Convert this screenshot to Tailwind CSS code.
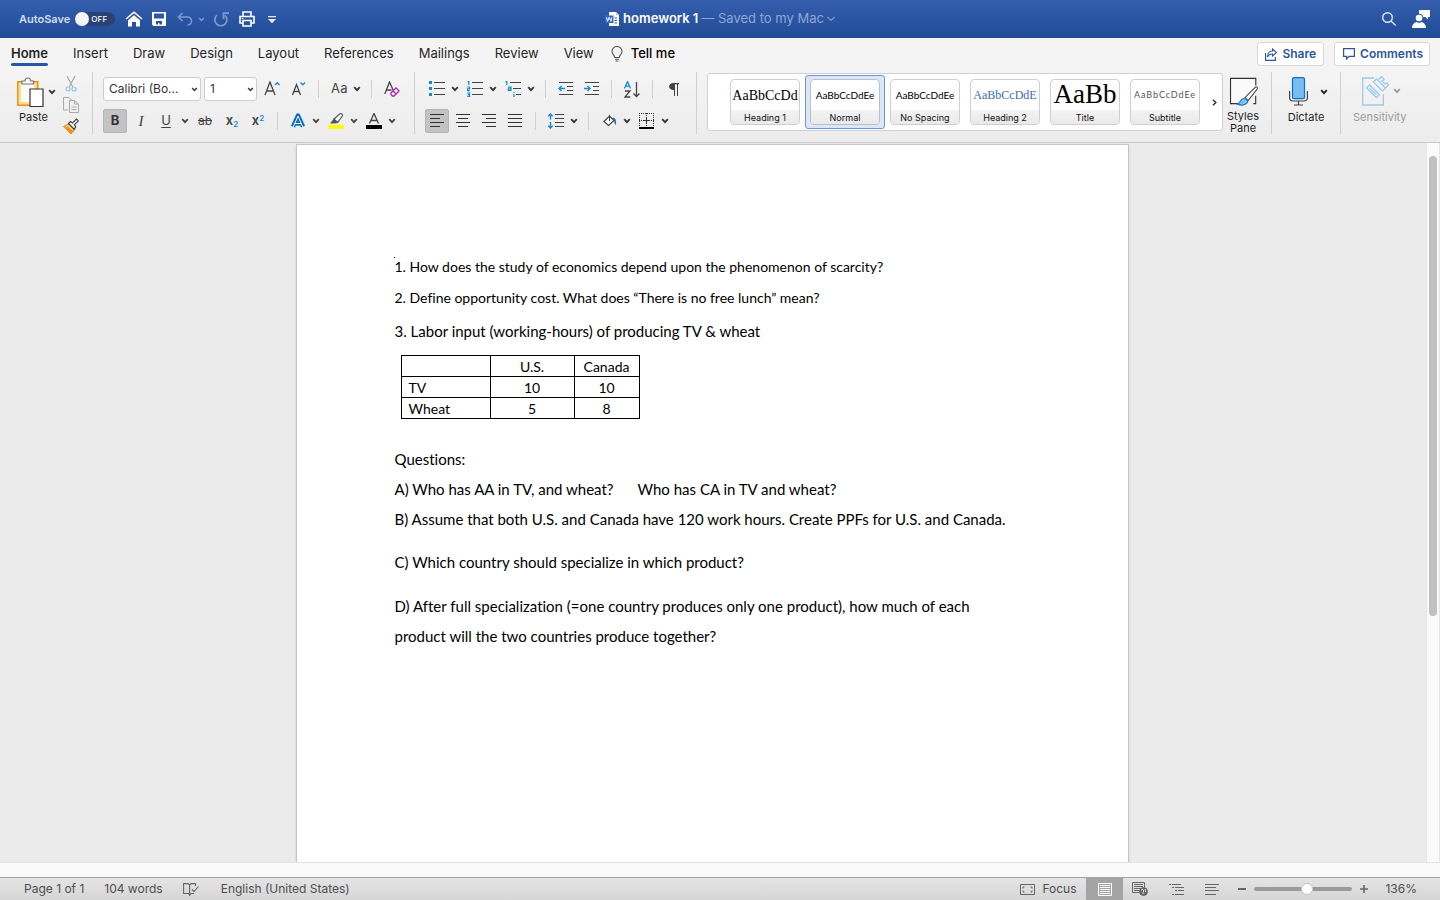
<!DOCTYPE html>
<html lang="en">
<head>
    <meta charset="UTF-8">
    <meta name="viewport" content="width=device-width, initial-scale=1.0">
    <title>homework 1</title>
    <script src="https://cdn.jsdelivr.net/npm/@tailwindcss/browser@4"></script>
</head>
<body class="h-screen flex flex-col overflow-hidden bg-[#ebebeb] text-[#262626] font-['Inter',sans-serif]">

    <!-- shared icons -->
    <svg class="hidden">
        <symbol id="chev" viewBox="0 0 8 6"><path d="M1.2 1.2 4 4.2 6.8 1.2" fill="none" stroke="currentColor" stroke-width="1.8"/></symbol>
    </svg>

    <!-- title bar -->
    <header class="h-[38px] shrink-0 grid grid-cols-[1fr_auto_1fr] items-center bg-linear-to-b from-[#355fae] to-[#204b96] text-white">
        <div class="flex items-center pl-[19px]">
            <label for="autosave" class="text-[11px] font-semibold text-[#d3dcee]">AutoSave</label>
            <div class="relative ml-[5px] w-10 h-[14px]">
                <input id="autosave" type="checkbox" class="appearance-none block w-10 h-[14px] rounded-full bg-[#2a4272]">
                <span class="absolute left-0 top-0 size-[14px] rounded-full bg-[#f4f4f4] pointer-events-none"></span>
                <span class="absolute left-4 top-0 text-[8px] leading-[14px] font-medium tracking-wide pointer-events-none">OFF</span>
            </div>
            <button class="ml-[10px]" aria-label="Home">
                <svg class="w-[18px] h-4" viewBox="0 0 18 16"><path d="M1 8 9 1.200 17 8" fill="none" stroke="#fff" stroke-width="1.600"/><path d="M3 9.200 9 4.200l6 5V15.500h-4v-4.500H7v4.500H3z" fill="#fff"/></svg>
            </button>
            <button class="ml-[9px]" aria-label="Save">
                <svg class="size-[14px]" viewBox="0 0 14 14"><path fill-rule="evenodd" fill="#fff" d="M0 0h14v14H1.500L0 12.500zM2 1.500v5h10v-5zM4 9v3.500h2V11h1.500v1.500H10V9z"/></svg>
            </button>
            <button class="ml-[11px]" aria-label="Undo">
                <svg class="w-4 h-[14px]" viewBox="0 0 16 14" fill="none" stroke="#7f98c8" stroke-width="1.600"><path d="M5.500 1 1.500 5l4 4M1.500 5H10c6 0 6 8 .5 8"/></svg>
            </button>
            <button class="ml-[5px] text-[#7f98c8]" aria-label="Undo list"><svg class="w-[7px] h-[5px]"><use href="#chev"/></svg></button>
            <button class="ml-[9px]" aria-label="Redo">
                <svg class="size-[15px]" viewBox="0 0 15 15" fill="none" stroke="#7f98c8" stroke-width="1.700"><path d="M3 3.200a6 6 0 1 0 8 .2M9.500 7V1.200H15"/></svg>
            </button>
            <button class="ml-[10px]" aria-label="Print">
                <svg class="size-4" viewBox="0 0 16 16" fill="none" stroke="#fff" stroke-width="1.600"><path d="M4 5V1h8v4M4 12H1V5.500h14V12h-3M4 9.500h8V15H4z"/><path d="M2.800 7.500h1.500" stroke-width="1.200"/></svg>
            </button>
            <button class="ml-[13px]" aria-label="Customize">
                <svg class="w-2 h-[9px]" viewBox="0 0 8 9"><path d="M0 1h8v1.300H0zM0 4h8L4 8.300z" fill="#e6ebf5"/></svg>
            </button>
        </div>
        <div class="flex items-center text-[13px]">
            <svg class="w-[14px] h-[14px] mr-1" viewBox="0 0 14 14"><path d="M4 0h7l3 3v11H4z" fill="#fff"/><path d="M11 0v3h3z" fill="#b9c8e6"/><path d="M9.500 6H12M9.500 8.500H12M9.500 11H12" stroke="#2a5cb3"/><path d="M0 3.500h8.500v7.500H0z" fill="#2f6ac8"/><path d="m1.500 5.300 1 4 1.700-4 1.700 4 1-4" fill="none" stroke="#fff" stroke-width="1"/></svg>
            <h1 class="font-semibold">homework 1</h1>
            <span class="ml-[3px] text-[#91a7d3]">— Saved to my Mac</span>
            <svg class="ml-[3px] w-2 h-[6px]" viewBox="0 0 8 6"><path d="m.5 1 3.500 3.500L7.500 1" fill="none" stroke="#7e98c9" stroke-width="1.200"/></svg>
        </div>
        <div class="flex items-center justify-end pr-[10px] gap-4">
            <button aria-label="Search"><svg class="size-[14px]" viewBox="0 0 14 14" fill="none" stroke="#e3e9f5" stroke-width="1.400"><circle cx="5.500" cy="5.500" r="4.800"/><path d="m9 9 4.700 4.500"/></svg></button>
            <button aria-label="Account"><svg class="size-[18px]" viewBox="0 0 18 18" fill="#fff"><path d="M7 0h11v7h-2v2.500L13.500 7H11C11 4.500 9 3.500 7 3.700z"/><circle cx="7" cy="8" r="3.300"/><path d="M0 18c0-3.500 2-5.500 4.500-6L7 13l2.500-1c2.500.5 4.500 2.500 4.500 6z"/></svg></button>
        </div>
    </header>

    <!-- ribbon tabs -->
    <div class="h-8 shrink-0 flex items-center justify-between pl-[11px] pr-[10px] bg-[#f4f4f4] text-[13px]">
        <nav class="h-full flex items-center gap-[25px]">
            <a href="#" class="relative font-semibold after:absolute after:inset-x-0 after:-bottom-[2px] after:h-[3px] after:rounded-full after:bg-[#2a55a5]">Home</a>
            <a href="#">Insert</a>
            <a href="#">Draw</a>
            <a href="#">Design</a>
            <a href="#">Layout</a>
            <a href="#">References</a>
            <a href="#">Mailings</a>
            <a href="#">Review</a>
            <a href="#">View</a>
            <a href="#" class="-ml-2 flex items-center gap-2 font-medium text-black">
                <svg class="w-3 h-4" viewBox="0 0 12 16" fill="none" stroke="#555" stroke-width="1.100"><path d="M3.800 11.500C3.800 9 1 8.500 1 5.500a5 5 0 0 1 10 0c0 3-2.800 3.500-2.800 6zM4 13.300h4M4.500 15h3"/></svg>
                Tell me
            </a>
        </nav>
        <div class="flex gap-[10px] font-semibold text-[12px] text-[#2a559f]">
            <button class="h-6 px-[7px] flex items-center gap-[5px] bg-white border border-[#d9d9d9] rounded-[3px]">
                <svg class="w-3 h-[13px]" viewBox="0 0 12 13" fill="none" stroke="currentColor" stroke-width="1.100"><path d="M.6 5v7.400h9.800V9M7.500 1l4 3.500-4 3.500V6C5 6 3.500 7 2.500 9c0-3.500 2-6 5-6z"/></svg>
                Share
            </button>
            <button class="h-6 pl-2 pr-[6px] flex items-center gap-[5px] bg-white border border-[#d9d9d9] rounded-[3px]">
                <svg class="w-3 h-3" viewBox="0 0 12 12" fill="none" stroke="currentColor" stroke-width="1.200"><path d="M.6.6h10.800v7.800H6L3.500 11V8.400H.6z"/></svg>
                Comments
            </button>
        </div>
    </div>

    <!-- ribbon -->
    <div class="h-[73px] shrink-0 flex bg-linear-to-b from-[#f4f4f4] to-[#ececec] border-b border-[#c9c9c9] text-[#333]">

        <!-- clipboard -->
        <section class="w-[93px] h-[62px] mt-[2px] shrink-0 flex border-r border-[#cfcfcf]">
            <button class="ml-[17px] mt-[5px] w-[34px] flex flex-col items-start text-[11px] text-[#1e1e1e]">
                <svg class="w-[27px] h-[31px]" viewBox="0 0 27 31"><path d="M.8 4.800h20v23.400H.8z" fill="#fde08f" stroke="#f08a10" stroke-width="1.400"/><path d="M4 7h13v18H4z" fill="#fafafa"/><path d="M5 7V4h3c0-4 5.500-4 5.500 0h3v3z" fill="#fff" stroke="#777" stroke-width="1.200"/><path d="M13 12h13v17.500H13z" fill="#fff" stroke="#333" stroke-width="1.200"/></svg>
                <span class="mt-[2px] ml-[2px] leading-[14px]">Paste</span>
            </button>
            <button class="w-[2px] h-10 flex items-center justify-center" aria-label="Paste options"><svg class="w-2 h-[6px] shrink-0"><use href="#chev"/></svg></button>
            <div class="ml-[10px] mt-1 flex flex-col items-center gap-[5px]">
                <button aria-label="Cut"><svg class="size-4" viewBox="0 0 16 16" fill="none" stroke="#aaa" stroke-width="1.200"><path d="m4 0 5.800 11M12 0 6.200 11"/><circle cx="5" cy="13" r="2" stroke="#8fc4ea"/><circle cx="11" cy="13" r="2" stroke="#8fc4ea"/></svg></button>
                <button aria-label="Copy"><svg class="size-4" viewBox="0 0 16 16" fill="none" stroke="#aaa"><path d="M5 13H.5V.5H6L8.500 3"/><path d="M6.500 3.500h5L15.500 7v8.500h-9zM11.500 3.500V7h4M8.500 10h5M8.500 12.500h5"/></svg></button>
                <button aria-label="Format painter"><svg class="size-4" viewBox="0 0 16 16"><path d="M1 8.500 5.500 6l6 5.500L8 15.500z" fill="#ffd9a0" stroke="#f08a10" stroke-width="1.300"/><path d="M3 9.500 8 15l1.500-2L5 8.500z" fill="#f08a10"/><path d="M5.500 5.500 7.500 3.500l2 1.500L13.500 1l1.800 1.800-4 4 1.500 2-1.600 2.400z" fill="#fff" stroke="#444" stroke-width="1.200"/></svg></button>
            </div>
        </section>

        <!-- font -->
        <section class="w-[322px] h-[62px] mt-[2px] shrink-0 pl-[10px] pt-[5px] flex flex-col gap-2 border-r border-[#cfcfcf]">
            <div class="h-6 flex items-center">
                <div class="relative">
                    <select aria-label="Font" class="appearance-none block w-[98px] h-6 pl-[5px] text-[12px] bg-white border border-[#cdcdcd] rounded-[3px]"><option>Calibri (Bo...</option></select>
                    <svg class="absolute right-[3px] top-[10px] w-[7px] h-[5px] pointer-events-none"><use href="#chev"/></svg>
                </div>
                <div class="relative ml-[3px]">
                    <select aria-label="Font size" class="appearance-none block w-[53px] h-6 pl-[5px] text-[12px] bg-white border border-[#cdcdcd] rounded-[3px]"><option>1</option></select>
                    <svg class="absolute right-[3px] top-[10px] w-[7px] h-[5px] pointer-events-none"><use href="#chev"/></svg>
                </div>
                <button class="ml-[7px] w-4" aria-label="Grow font"><svg class="size-4" viewBox="0 0 16 16" fill="none" stroke="#444" stroke-width="1.300"><path d="M1 14 6 1l5 13M2.800 10h6.400"/><path d="m11 4 2.300-2.300L15.600 4" stroke="#1588d0"/></svg></button>
                <button class="ml-[11px] w-4" aria-label="Shrink font"><svg class="size-4" viewBox="0 0 16 16" fill="none" stroke="#444" stroke-width="1.300"><path d="M1.500 14 5.500 3.500l4 10.500M3 10.500h5"/><path d="m9.500 1.500 2.300 2.300L14 1.500" stroke="#1588d0"/></svg></button>
                <span class="ml-[11px] w-px h-[18px] bg-[#d0d0d0]"></span>
                <button class="ml-3 text-[13px] tracking-wide text-[#444]">Aa</button>
                <button class="ml-[3px] w-3 flex justify-center" aria-label="Case options"><svg class="w-2 h-[6px]"><use href="#chev"/></svg></button>
                <span class="ml-2 w-px h-[18px] bg-[#d0d0d0]"></span>
                <button class="ml-3" aria-label="Clear formatting"><svg class="size-4" viewBox="0 0 16 16" fill="none" stroke="#444" stroke-width="1.300"><path d="M.8 13 5.500 1 10 11M2.500 9h5"/><path d="m7 12 5-5 3 3-5 5H8.500L7 13.500zM9 10l3.200 3" fill="#fff" stroke="#b01fb8"/></svg></button>
            </div>
            <div class="h-6 flex items-center text-[13px] text-[#444]">
                <button class="size-6 rounded-[2px] bg-[#c3c3c3] border border-[#b5b5b5] font-bold text-[#333]">B</button>
                <button class="w-7 font-['Liberation_Serif',serif] italic text-[15px]">I</button>
                <button class="w-[22px] underline underline-offset-2">U</button>
                <button class="w-4 flex justify-center" aria-label="Underline options"><svg class="w-2 h-[6px]"><use href="#chev"/></svg></button>
                <button class="w-6 text-[12px] line-through">ab</button>
                <button class="w-[30px] font-semibold">x<sub class="text-[8px] text-[#1588d0]">2</sub></button>
                <button class="w-[22px] font-semibold">x<sup class="text-[8px] text-[#1588d0]">2</sup></button>
                <span class="ml-2 w-px h-[18px] bg-[#d0d0d0]"></span>
                <button class="ml-3" aria-label="Text effects"><svg class="w-4 h-4" viewBox="0 0 16 16" fill="none" stroke-linejoin="round"><path d="M3 13.500 8 2.500l5 11M5 10.500h6" stroke="#8cc4ee" stroke-width="5"/><path d="M3 13.800 8 2.500l5 11.300M5 10.500h6" stroke="#0a66b7" stroke-width="4"/><path d="M3 14.500 8 3l5 11.500M5 10.500h6" stroke="#fff"/></svg></button>
                <button class="ml-[2px] w-4 flex justify-center" aria-label="Text effects options"><svg class="w-2 h-[6px]"><use href="#chev"/></svg></button>
                <button class="ml-1" aria-label="Highlight"><svg class="w-4 h-4" viewBox="0 0 16 16"><path d="M0 12h16v4H0z" fill="#ff0"/><path d="m6 6 6-5.300c1.500-.5 3 1 2.300 2.300L9.500 9.500z" fill="#fff" stroke="#555" stroke-width="1.200"/><path d="M6 5.500 10 9.500 7 10.500H2z" fill="#555"/></svg></button>
                <button class="ml-[2px] w-4 flex justify-center" aria-label="Highlight options"><svg class="w-2 h-[6px]"><use href="#chev"/></svg></button>
                <button class="ml-1" aria-label="Font color"><svg class="w-4 h-4" viewBox="0 0 16 16"><path d="M0 12h16v4H0z"/><path d="M3.500 10.500 8 .5l4.500 10M5 7.500h6" fill="none" stroke="#444" stroke-width="1.300"/></svg></button>
                <button class="ml-[2px] w-4 flex justify-center" aria-label="Font color options"><svg class="w-2 h-[6px]"><use href="#chev"/></svg></button>
            </div>
        </section>

        <!-- paragraph -->
        <section class="w-[282px] h-[62px] mt-[2px] shrink-0 pl-[10px] pt-[5px] flex flex-col gap-2 border-r border-[#cfcfcf]">
            <div class="h-6 flex items-center">
                <button class="ml-1" aria-label="Bullets"><svg class="size-4" viewBox="0 0 16 16"><path d="M0 0h3v3H0zM0 6h3v3H0zM0 12h3v3H0z" fill="#1588d0"/><path d="M5 1.500h11M5 7.500h11M5 13.500h11" stroke="#444"/></svg></button>
                <button class="ml-[2px] w-4 flex justify-center" aria-label="Bullet options"><svg class="w-2 h-[6px]"><use href="#chev"/></svg></button>
                <button class="ml-1" aria-label="Numbering"><svg class="size-4" viewBox="0 0 16 16"><path d="M5 1.500h11M5 7.500h11M5 13.500h11" stroke="#444"/><path d="M.5 1 1.800.5V4M.3 6h2.200v1.800H.5v1.900h2.300M.3 12h2.300v3.300H.3M.8 13.600h1.800" fill="none" stroke="#1588d0" stroke-width="1.200"/></svg></button>
                <button class="ml-[2px] w-4 flex justify-center" aria-label="Numbering options"><svg class="w-2 h-[6px]"><use href="#chev"/></svg></button>
                <button class="ml-1" aria-label="Multilevel list"><svg class="size-4" viewBox="0 0 16 16"><path d="M5 1.500h11M8 7.500h8M11 13.500h5" stroke="#444"/><path d="M.5 1 1.800.5V4M3 6.200h3v3.300H3.300V7.800H6M9 11v1M9 13v3" fill="none" stroke="#1588d0" stroke-width="1.200"/></svg></button>
                <button class="ml-[2px] w-4 flex justify-center" aria-label="Multilevel options"><svg class="w-2 h-[6px]"><use href="#chev"/></svg></button>
                <span class="ml-[6px] w-px h-[18px] bg-[#d0d0d0]"></span>
                <button class="ml-3" aria-label="Decrease indent"><svg class="w-[15px] h-4" viewBox="0 0 15 16" fill="none" stroke="#444"><path d="M1 1.500h14M9 5.500h6M9 9.500h6M1 13.500h14"/><path d="M7 7.500H1M3.500 5 1 7.500 3.500 10" stroke="#1588d0" stroke-width="1.400"/></svg></button>
                <button class="ml-[11px]" aria-label="Increase indent"><svg class="w-[15px] h-4" viewBox="0 0 15 16" fill="none" stroke="#444"><path d="M1 1.500h14M9 5.500h6M9 9.500h6M1 13.500h14"/><path d="M0 7.500h6M3.500 5 6 7.500 3.500 10" stroke="#1588d0" stroke-width="1.400"/></svg></button>
                <span class="ml-3 w-px h-[18px] bg-[#d0d0d0]"></span>
                <button class="ml-3" aria-label="Sort"><svg class="w-4 h-[17px]" viewBox="0 0 16 17" fill="none" stroke="#444" stroke-width="1.300"><path d="m.5 7.500 3-7 3 7M1.500 5.200h4" stroke="#1588d0"/><path d="M1 10h5l-5 6h5.300M12.500 1v14.500M9.500 12.500l3 3 3-3"/></svg></button>
                <span class="ml-3 w-px h-[18px] bg-[#d0d0d0]"></span>
                <button class="ml-4" aria-label="Show marks"><svg class="w-[10px] h-[13px]" viewBox="0 0 10 13"><path d="M4.500 0H10v1.200H9V13H8V1.200H6V13H5V7H4C-1.300 7-1.300 0 4.500 0z" fill="#444"/></svg></button>
            </div>
            <div class="h-6 flex items-center">
                <button class="size-6 rounded-[2px] bg-[#c3c3c3] border border-[#b5b5b5] flex items-center justify-center" aria-label="Align left"><svg class="w-[14px] h-[14px]" viewBox="0 0 14 14" stroke="#333"><path d="M0 .5h14M0 4.500h10M0 8.500h14M0 12.500h10"/></svg></button>
                <button class="ml-[7px]" aria-label="Center"><svg class="w-[14px] h-[14px]" viewBox="0 0 14 14" stroke="#333"><path d="M0 .5h14M2 4.500h10M0 8.500h14M2 12.500h10"/></svg></button>
                <button class="ml-3" aria-label="Align right"><svg class="w-[14px] h-[14px]" viewBox="0 0 14 14" stroke="#333"><path d="M0 .5h14M4 4.500h10M0 8.500h14M4 12.500h10"/></svg></button>
                <button class="ml-3" aria-label="Justify"><svg class="w-[14px] h-[14px]" viewBox="0 0 14 14" stroke="#333"><path d="M0 .5h14M0 4.500h14M0 8.500h14M0 12.500h14"/></svg></button>
                <span class="ml-[13px] w-px h-[18px] bg-[#d0d0d0]"></span>
                <button class="ml-3" aria-label="Line spacing"><svg class="w-4 h-4" viewBox="0 0 16 16" fill="none" stroke="#444"><path d="M7 1.500h9M7 5.500h9M7 9.500h9M7 13.500h9"/><path d="M2.500 1v5.500M.3 3.200 2.500 1l2.200 2.200M2.500 9v6M.3 12.800 2.500 15l2.200-2.200" stroke="#1588d0" stroke-width="1.400"/></svg></button>
                <button class="ml-[2px] w-4 flex justify-center" aria-label="Line spacing options"><svg class="w-2 h-[6px]"><use href="#chev"/></svg></button>
                <span class="ml-[6px] w-px h-[18px] bg-[#d0d0d0]"></span>
                <button class="ml-[14px]" aria-label="Shading"><svg class="w-[14px] h-[14px]" viewBox="0 0 14 14"><path d="M1 7.500 6.500 2l4.500 4.500-5.500 5z" fill="#fff" stroke="#444" stroke-width="1.200"/><path d="M6.500 7V.8" stroke="#444"/><path d="M9.500 3.500c3 0 4 3 3.500 7.500-1.500-.5-1.500-3-2-4.500z" fill="#2a6cb5"/></svg></button>
                <button class="ml-[2px] w-4 flex justify-center" aria-label="Shading options"><svg class="w-2 h-[6px]"><use href="#chev"/></svg></button>
                <button class="ml-1" aria-label="Borders"><svg class="w-[15px] h-4" viewBox="0 0 15 16" fill="none" stroke="#333" shape-rendering="crispEdges"><path d="M0 .5h15M0 7.500h15M.5 0v14M7.500 0v14M14.500 0v14" stroke-dasharray="1 1"/><path d="M5 7.500h5M7.500 5v5"/><path d="M0 15h15" stroke="#000" stroke-width="2"/></svg></button>
                <button class="ml-[3px] w-4 flex justify-center" aria-label="Border options"><svg class="w-2 h-[6px]"><use href="#chev"/></svg></button>
            </div>
        </section>

        <!-- styles -->
        <section class="flex-1 h-[62px] mt-[2px] pl-[10px] pr-2 flex border-r border-[#cfcfcf]">
            <div class="flex-1 h-[58px] mt-px pl-[17px] flex items-center bg-white border border-[#d0d0d0] rounded-[3px] text-[9px] text-[#111]">
                <button class="w-20 h-[54px] flex items-center justify-center">
                    <span class="w-[70px] h-[46px] flex flex-col overflow-hidden border border-[#cfcfcf] rounded-[4px] bg-white">
                        <span class="h-[30px] shrink-0 flex items-center justify-center whitespace-nowrap font-['Liberation_Serif',serif] text-[14px] text-black">AaBbCcDd</span>
                        <span class="h-[14px] leading-[15px] bg-linear-to-b from-[#f3f3f3] to-[#e9e9e9]">Heading 1</span>
                    </span>
                </button>
                <button class="w-20 h-[54px] flex items-center justify-center bg-[#dce6f4] border border-[#6b97d6] rounded-[3px]">
                    <span class="w-[70px] h-[46px] flex flex-col overflow-hidden border border-[#b5bfcd] rounded-[4px] bg-white">
                        <span class="h-[30px] shrink-0 flex items-center justify-center whitespace-nowrap font-['Lato',sans-serif] text-[10px] text-black">AaBbCcDdEe</span>
                        <span class="h-[14px] leading-[15px] bg-linear-to-b from-[#f3f3f3] to-[#e9e9e9]">Normal</span>
                    </span>
                </button>
                <button class="w-20 h-[54px] flex items-center justify-center">
                    <span class="w-[70px] h-[46px] flex flex-col overflow-hidden border border-[#cfcfcf] rounded-[4px] bg-white">
                        <span class="h-[30px] shrink-0 flex items-center justify-center whitespace-nowrap font-['Lato',sans-serif] text-[10px] text-black">AaBbCcDdEe</span>
                        <span class="h-[14px] leading-[15px] bg-linear-to-b from-[#f3f3f3] to-[#e9e9e9]">No Spacing</span>
                    </span>
                </button>
                <button class="w-20 h-[54px] flex items-center justify-center">
                    <span class="w-[70px] h-[46px] flex flex-col overflow-hidden border border-[#cfcfcf] rounded-[4px] bg-white">
                        <span class="h-[30px] shrink-0 flex items-center justify-center whitespace-nowrap font-['Liberation_Serif',serif] text-[12px] text-[#3d6cae]">AaBbCcDdE</span>
                        <span class="h-[14px] leading-[15px] bg-linear-to-b from-[#f3f3f3] to-[#e9e9e9]">Heading 2</span>
                    </span>
                </button>
                <button class="w-20 h-[54px] flex items-center justify-center">
                    <span class="w-[70px] h-[46px] flex flex-col overflow-hidden border border-[#cfcfcf] rounded-[4px] bg-white">
                        <span class="h-[30px] shrink-0 leading-[29px] whitespace-nowrap font-['Liberation_Serif',serif] text-[27px] text-black">AaBb</span>
                        <span class="h-[14px] leading-[15px] bg-linear-to-b from-[#f3f3f3] to-[#e9e9e9]">Title</span>
                    </span>
                </button>
                <button class="w-20 h-[54px] flex items-center justify-center">
                    <span class="w-[70px] h-[46px] flex flex-col overflow-hidden border border-[#cfcfcf] rounded-[4px] bg-white">
                        <span class="h-[30px] shrink-0 flex items-center justify-center whitespace-nowrap font-['Lato',sans-serif] text-[9px] tracking-widest text-[#555]">AaBbCcDdEe</span>
                        <span class="h-[14px] leading-[15px] bg-linear-to-b from-[#f3f3f3] to-[#e9e9e9]">Subtitle</span>
                    </span>
                </button>
                <button class="ml-[7px]" aria-label="More styles"><svg class="w-[5px] h-[7px]" viewBox="0 0 5 7"><path d="m1 .7 2.800 2.800L1 6.300" fill="none" stroke="#333" stroke-width="1.500"/></svg></button>
            </div>
            <button class="w-10 mt-[5px] flex flex-col items-center text-[11px] leading-3 text-[#1e1e1e]">
                <svg class="w-[30px] h-[31px] ml-[2px]" viewBox="0 0 30 31"><path d="M27.500 20v8.500H25M11 28.500H.6V1.500h27V9" fill="#fafafa" stroke="#333" stroke-width="1.200"/><path d="M16 22 27 11c1.500-1 3 0 2 2L19.500 25z" fill="#fff" stroke="#555" stroke-width="1.200"/><path d="M8 29c3-1 3-6 7-6 3 0 5 3 3 5s-6 2.500-10 1z" fill="#7fc0f0" stroke="#0f75c4" stroke-width="1.200"/></svg>
                <span class="mt-1">Styles Pane</span>
            </button>
        </section>

        <!-- dictate -->
        <section class="w-[69px] h-[62px] mt-[2px] shrink-0 flex justify-center border-r border-[#cfcfcf]">
            <button class="mt-1 flex flex-col items-center text-[11px] text-[#1e1e1e]">
                <span class="ml-1 h-[31px] flex items-center gap-3">
                    <svg class="w-[19px] h-[29px]" viewBox="0 0 19 29" fill="none" stroke="#444" stroke-width="1.200"><path d="M.6 14v6.500c0 2 1.500 3.500 3.500 3.500h10.800c2 0 3.500-1.500 3.500-3.500V14M9.500 24v4M5 28h9"/><rect x="3.500" y=".7" width="12" height="21" rx="1.500" fill="#78bdf2" stroke="#0f6fc0"/></svg>
                    <svg class="w-2 h-[6px]"><use href="#chev"/></svg>
                </span>
                <span class="mt-[3px] leading-[14px]">Dictate</span>
            </button>
        </section>

        <!-- sensitivity -->
        <section class="w-[99px] h-[62px] mt-[2px] shrink-0 pl-3">
            <button disabled class="mt-[2px] flex flex-col items-center text-[11px] text-[#9b9b9b]">
                <span class="ml-1 h-[33px] flex items-center gap-1">
                    <svg class="w-[27px] h-[30px]" viewBox="0 0 27 30" fill="none" stroke="#9ccbe6" stroke-width="1.300"><path d="M12 2H.7v27h20.600V18" /><path d="m4.500 12 3-3 10 9.500-3 3zM7.500 12l7 6.500" fill="#edf6fb"/><path d="m11.500 6 3-3 9 9-3 3zM16.500 3.500 19.500.7l2.500 2.500-2 2 3.500 3 1.500-1.500 1.800 2-3 3" fill="#edf6fb"/></svg>
                    <svg class="w-2 h-[6px]"><use href="#chev"/></svg>
                </span>
                <span class="mt-[3px] leading-[14px]">Sensitivity</span>
            </button>
        </section>
    </div>

    <!-- document area -->
    <div class="flex-1 min-h-0 flex">
        <main class="flex-1 flex justify-center pt-px pr-[2px] overflow-hidden">
            <article class="relative w-[833px] pl-[98px] pr-[110px] pt-[107px] bg-white border-x border-t border-[#c6c6c6] shadow text-black text-[15px] leading-[30px] font-['Lato',sans-serif] [font-variant-ligatures:none]">
                <!-- one-point full stop left on the first line -->
                <span class="absolute left-[97px] top-[112px] size-px bg-black"></span>
                <p class="text-[14px]">1. How does the study of economics depend upon the phenomenon of scarcity?</p>
                <p class="mt-px text-[14px]">2. Define opportunity cost. What does “There is no free lunch” mean?</p>
                <p class="mt-[3px]">3. Labor input (working-hours) of producing TV &amp; wheat</p>
                <table class="mt-[9px] ml-[6px] border-collapse text-[14px] leading-[18px] text-center">
                    <tr><td class="w-[89px] h-[21px] p-0 border border-black"></td><th scope="col" class="w-[84px] p-0 pt-[2px] font-normal border border-black">U.S.</th><th scope="col" class="w-[65px] p-0 pt-[2px] font-normal border border-black">Canada</th></tr>
                    <tr><th scope="row" class="p-0 pt-[2px] pl-[7px] font-normal text-left border border-black">TV</th><td class="p-0 pt-[2px] border border-black">10</td><td class="p-0 pt-[2px] border border-black">10</td></tr>
                    <tr><th scope="row" class="p-0 pt-[2px] pl-[7px] font-normal text-left border border-black">Wheat</th><td class="p-0 pt-[2px] border border-black">5</td><td class="p-0 pt-[2px] border border-black">8</td></tr>
                </table>
                <p class="mt-[25px]">Questions:</p>
                <p>A) Who has AA in TV, and wheat?<span class="ml-6">Who has CA in TV and wheat?</span></p>
                <p>B) Assume that both U.S. and Canada have 120 work hours. Create PPFs for U.S. and Canada.</p>
                <p class="mt-[13px]">C) Which country should specialize in which product?</p>
                <p class="mt-[14px]">D) After full specialization (=one country produces only one product), how much of each product will the two countries produce together?</p>
            </article>
        </main>
        <div class="w-[14px] pt-[13px] flex justify-center bg-[#fafafa] border-x border-[#e6e6e6]">
            <div class="w-2 h-[460px] rounded-full bg-[#c1c1c1]"></div>
        </div>
    </div>
    <div class="h-[15px] shrink-0 bg-[#fafafa] border-t border-[#e4e4e4]"></div>

    <!-- status bar -->
    <footer class="h-[23px] shrink-0 flex items-center justify-between pl-6 pr-[23px] border-t border-[#a3a3a3] bg-linear-to-b from-[#e4e4e4] to-[#d6d6d6] text-[12px] text-[#4f4f4f]">
        <div class="flex items-center">
            <span>Page 1 of 1</span>
            <span class="ml-5">104 words</span>
            <button class="ml-5" aria-label="Proofing"><svg class="w-4 h-[13px]" viewBox="0 0 16 13" fill="none" stroke="#666" stroke-width="1.100"><path d="M6.500 12 5.500 10.500H.6V.6h4.500l1.500 1.500v10L8 10.500h3M6.600 2.100 8 .6h4.500V3M9 6.500 11 8.500l4.500-5"/></svg></button>
            <span class="ml-[22px]">English (United States)</span>
        </div>
        <div class="h-full flex items-center">
            <button class="flex items-center gap-[7px]"><svg class="w-[15px] h-[11px]" viewBox="0 0 15 11" fill="none" stroke="#666"><path d="M.5.5h14v10H.5zM3 4.500V3h1.500M10.500 3H12v1.500M12 6.500V8h-1.500M4.500 8H3V6.500"/></svg>Focus</button>
            <button class="ml-[10px] w-[37px] h-full flex items-center justify-center bg-[#a4a4a4]" aria-label="Print layout"><svg class="w-[14px] h-[13px]" viewBox="0 0 14 13" fill="none" stroke="#fff"><path d="M.5.5h13v12H.5zM2 2.500h10M2 4.500h10M2 6.500h10M2 8.500h10M2 10.500h10"/></svg></button>
            <button class="ml-[9px]" aria-label="Web layout"><svg class="w-4 h-[14px]" viewBox="0 0 16 14" fill="none" stroke="#666"><path d="M7 10.500H.5V.5h12V5M2 2.500h9M2 4.500h9M2 6.500h6M2 8.500h5"/><circle cx="11.500" cy="9.500" r="4" fill="#666"/><path d="m9 8 2-.5 1 1.500-1 1v2M13 7l1 2-1 1" stroke="#ddd"/></svg></button>
            <button class="ml-[21px]" aria-label="Outline"><svg class="w-[15px] h-[11px]" viewBox="0 0 15 11" stroke="#666"><path d="M0 .5h2M3 .5h9M3 3.500h2M6 3.500h9M6 6.500h2M9 6.500h6M3 10.500h2M6 10.500h9"/></svg></button>
            <button class="ml-[21px]" aria-label="Draft"><svg class="w-[14px] h-[11px]" viewBox="0 0 14 11" stroke="#666"><path d="M0 .5h14M0 3.500h11M0 6.500h14M0 10.500h11"/></svg></button>
            <button class="ml-[19px]" aria-label="Zoom out"><svg class="w-2 h-2" viewBox="0 0 8 8"><path d="M0 4h8" stroke="#666" stroke-width="2"/></svg></button>
            <input type="range" min="0" max="100" value="54" aria-label="Zoom" class="appearance-none ml-2 w-[98px] h-1 rounded-full bg-[#9b9b9b] [&::-webkit-slider-thumb]:appearance-none [&::-webkit-slider-thumb]:size-3 [&::-webkit-slider-thumb]:rounded-full [&::-webkit-slider-thumb]:bg-white [&::-webkit-slider-thumb]:border [&::-webkit-slider-thumb]:border-[#c4c4c4]">
            <button class="ml-2" aria-label="Zoom in"><svg class="w-2 h-2" viewBox="0 0 8 8"><path d="M0 4h8M4 0v8" stroke="#666" stroke-width="1.600"/></svg></button>
            <span class="ml-[17px]">136%</span>
        </div>
    </footer>
</body>
</html>
